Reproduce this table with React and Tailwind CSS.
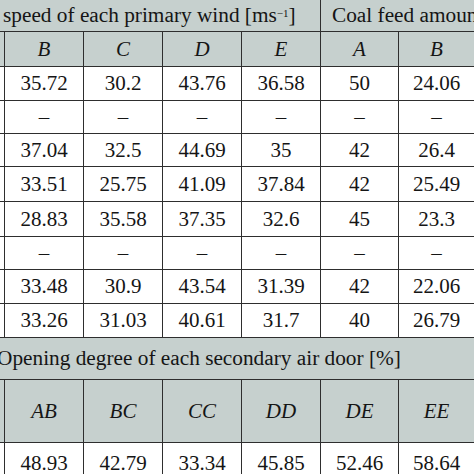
const W = ["w-[5px]", "w-[79px]", "w-[79px]", "w-[79px]", "w-[79px]", "w-[78px]", "flex-1"];

const dataRows = [
  { h: "h-[34px]", v: ["35.72", "30.2", "43.76", "36.58", "50", "24.06"] },
  { h: "h-[33px]", v: ["–", "–", "–", "–", "–", "–"] },
  { h: "h-[33px]", v: ["37.04", "32.5", "44.69", "35", "42", "26.4"] },
  { h: "h-[35px]", v: ["33.51", "25.75", "41.09", "37.84", "42", "25.49"] },
  { h: "h-[35px]", v: ["28.83", "35.58", "37.35", "32.6", "45", "23.3"] },
  { h: "h-[33px]", v: ["–", "–", "–", "–", "–", "–"] },
  { h: "h-[34px]", v: ["33.48", "30.9", "43.54", "31.39", "42", "22.06"] },
  { h: "h-[34px]", v: ["33.26", "31.03", "40.61", "31.7", "40", "26.79"] },
];

function Row({ h, values, gray, italic, last }) {
  return (
    <div className={`flex ${h} ${last ? "" : "border-b border-[#2e2e2e]"} ${gray ? "bg-[#c6d0ce]" : "bg-white"}`}>
      {W.map((w, i) => (
        <div
          key={i}
          className={`${w} shrink-0 flex items-center justify-center font-['Liberation_Serif','Times_New_Roman',serif] ${i < 6 ? "border-r border-[#2e2e2e]" : ""} ${italic ? "italic" : ""}`}
        >
          {i === 0 ? null : values[i - 1]}
        </div>
      ))}
    </div>
  );
}

export default function App() {
  return (
    <div className="w-[474px] h-[474px] overflow-hidden bg-white text-[#151515] text-[21px] leading-none font-['Liberation_Serif','Times_New_Roman',serif]">
      <div className="flex h-[32px] border-b border-[#2e2e2e] bg-[#c6d0ce]">
        <div className="w-[321px] shrink-0 border-r border-[#2e2e2e] flex items-center pl-[3px] whitespace-nowrap overflow-hidden text-[21.3px]">
          speed of each primary wind [ms<sup className="text-[11px] relative -top-[3px]">−1</sup>]
        </div>
        <div className="flex-1 flex items-center pl-[11px] whitespace-nowrap overflow-hidden text-[21.3px]">
          Coal feed amount [t/h]
        </div>
      </div>
      <Row h="h-[35px]" values={["B", "C", "D", "E", "A", "B"]} gray italic />
      {dataRows.map((r, i) => (
        <Row key={i} h={r.h} values={r.v} />
      ))}
      <div className="flex h-[42px] border-b border-[#2e2e2e] bg-[#c6d0ce] items-center whitespace-nowrap overflow-hidden text-[21.3px]">
        <span className="ml-[-3px]">Opening degree of each secondary air door [%]</span>
      </div>
      <Row h="h-[63px]" values={["AB", "BC", "CC", "DD", "DE", "EE"]} gray italic />
      <Row h="h-[40px]" values={["48.93", "42.79", "33.34", "45.85", "52.46", "58.64"]} last />
    </div>
  );
}
